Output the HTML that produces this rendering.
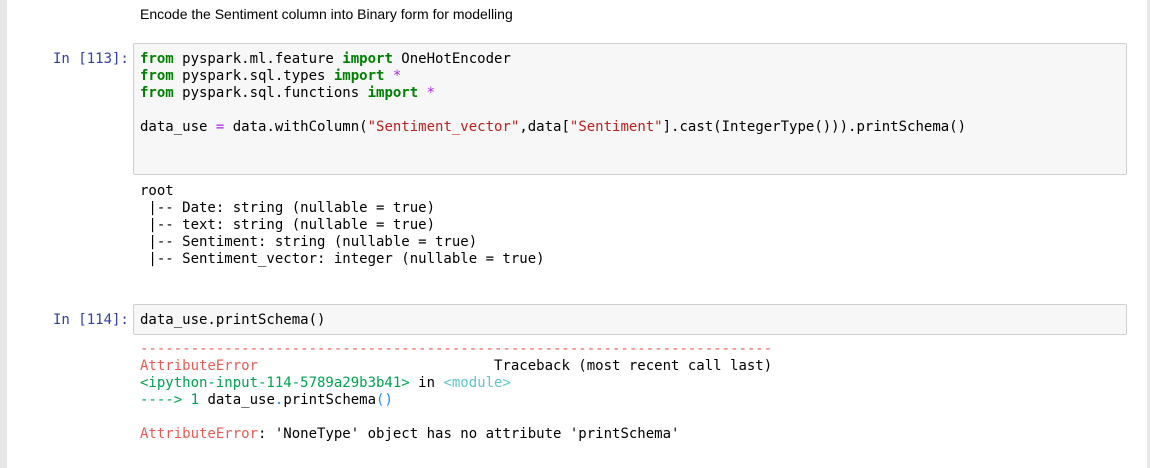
<!DOCTYPE html>
<html><head><style>
body{margin:0;width:1150px;height:468px;background:#fff;position:relative;overflow:hidden}
.lb{position:absolute;left:0;top:0;width:7px;height:468px;background:#e7e7e7}
.rb{position:absolute;left:1147px;top:0;width:3px;height:468px;background:#e7e7e7}
.md{position:absolute;left:140px;top:6px;font:14px "Liberation Sans",sans-serif;color:#000}
pre{margin:0;font:14px "DejaVu Sans Mono",monospace;line-height:17px;position:absolute;white-space:pre}
.box{position:absolute;left:133px;width:992px;background:#f7f7f7;border:1px solid #cfcfcf;border-radius:2px}
.p{position:absolute;font:14px "DejaVu Sans Mono",monospace;color:#303f9f}
.k{color:#008000;font-weight:bold}.o{color:#aa22ff}.s{color:#ba2121}
.r{color:#e75c58}.g{color:#00a250}.c{color:#60c6c8}.b{color:#208ffb}
</style></head><body>
<div class="lb"></div><div class="rb"></div>
<div class="md">Encode the Sentiment column into Binary form for modelling</div>
<div class="p" style="left:53px;top:51px">In [113]:</div>
<div class="box" style="top:43px;height:130px"></div>
<pre style="left:140px;top:51px"><span class="k">from</span> pyspark.ml.feature <span class="k">import</span> OneHotEncoder
<span class="k">from</span> pyspark.sql.types <span class="k">import</span> <span class="o">*</span>
<span class="k">from</span> pyspark.sql.functions <span class="k">import</span> <span class="o">*</span>

data_use <span class="o">=</span> data.withColumn(<span class="s">"Sentiment_vector"</span>,data[<span class="s">"Sentiment"</span>].cast(IntegerType())).printSchema()</pre>
<pre style="left:140px;top:183px">root
 |-- Date: string (nullable = true)
 |-- text: string (nullable = true)
 |-- Sentiment: string (nullable = true)
 |-- Sentiment_vector: integer (nullable = true)</pre>
<div class="p" style="left:53px;top:312px">In [114]:</div>
<div class="box" style="top:304px;height:29px"></div>
<pre style="left:140px;top:312px">data_use.printSchema()</pre>
<pre style="left:140px;top:341px"><span class="r">---------------------------------------------------------------------------</span>
<span class="r">AttributeError</span>                            Traceback (most recent call last)
<span class="g">&lt;ipython-input-114-5789a29b3b41&gt;</span> in <span class="c">&lt;module&gt;</span>
<span class="g">----&gt; 1</span> data_use<span class="b">.</span>printSchema<span class="b">()</span>

<span class="r">AttributeError</span>: 'NoneType' object has no attribute 'printSchema'</pre>
</body></html>
